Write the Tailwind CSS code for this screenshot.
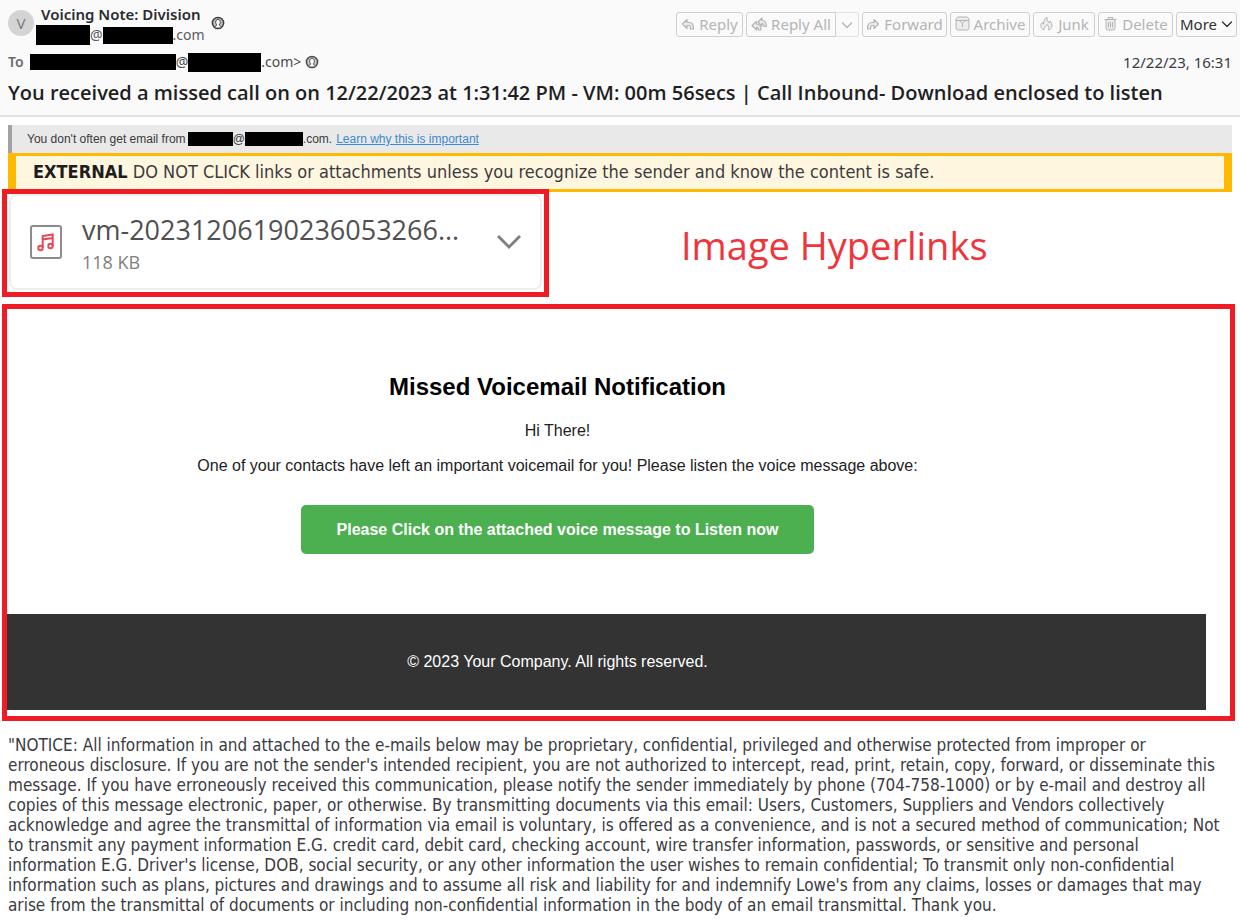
<!DOCTYPE html>
<html lang="en">
<head>
    <meta charset="UTF-8">
    <meta name="viewport" content="width=device-width, initial-scale=1.0">
    <title>You received a missed call</title>
    <script src="https://cdn.jsdelivr.net/npm/@tailwindcss/browser@4"></script>
</head>
<body class="bg-white text-[#3b3b3f] font-['Noto_Sans',sans-serif]">
    <svg class="hidden">
        <symbol id="contact" viewBox="0 0 14 14" fill="none" stroke="currentColor">
            <circle cx="7" cy="7" r="5.6" stroke-width="1.5" fill="#c4c4c4"/>
            <path d="M3.300 11.300c.6-1.300 2.300-1.300 2.300-2.500C4.100 7 4.300 3.500 7 3.500s2.900 3.500 1.400 5.300c0 1.200 1.700 1.200 2.300 2.500" stroke-width="1" fill="#fafafa"/>
        </symbol>
        <symbol id="chevron" viewBox="0 0 12 12" fill="none" stroke="currentColor">
            <path d="M1.500 4L6 8.500 10.500 4" stroke-width="1.300" stroke-linecap="round" stroke-linejoin="round"/>
        </symbol>
    </svg>

    <!-- Message header -->
    <header class="bg-[#fafafa] border-b-2 border-[#e1e1e2] px-2 h-[117px]">
        <div class="flex justify-between">
            <div class="flex pt-1">
                <div class="mt-[6px] flex size-[26px] items-center justify-center rounded-full bg-[#d4d4d4] text-[15px] text-[#7b7b7b]">V</div>
                <div class="ml-[2px]">
                    <div class="ml-[5px] text-[15px] leading-[21px] font-semibold text-[#2b2b30]">Voicing Note: Division</div>
                    <div class="flex h-5 items-center text-sm leading-5 text-[#5b5b5f]">
                        <span class="h-5 w-[54px] bg-black"></span>@<span class="h-[17px] w-[70px] bg-black"></span>.com
                    </div>
                </div>
                <svg class="mt-3 ml-[6px] size-[14px]"><use href="#contact"/></svg>
            </div>
            <div class="-mr-[5px] flex gap-[3px] pt-3 text-[15px] leading-5 text-[#b4b4b6]">
                <button class="flex h-[25px] w-[67px] items-center justify-center gap-1 rounded-[3px] border border-[#cfcfd1] pb-[2px]">
                    <svg class="size-[14px]" viewBox="0 0 14 14" fill="#ececec" stroke="currentColor" stroke-width="1.200" stroke-linejoin="round"><path d="M6 2.500L1.500 7 6 11.500V8.500h2c1.200 0 1.500.8 1.500 3.500h3C12.500 7.500 11 5.500 8 5.500H6z"/></svg>
                    Reply
                </button>
                <div class="flex">
                    <button class="flex h-[25px] w-[90px] items-center justify-center gap-1 rounded-l-[3px] border border-[#cfcfd1] pb-[2px]">
                        <svg class="h-[14px] w-4" viewBox="0 0 16 14" fill="#ececec" stroke="currentColor" stroke-width="1.200" stroke-linejoin="round"><path d="M11 1L7 5l4 4V6.500c1.500 0 2 1 2 3h2.200C15.500 6 14 3.500 11 3.500z"/><path d="M5.500 4.500L1 8.500l4.500 4.500v-2.700c1.600 0 2 .7 2 2.700H10c0-4-1-6-4.500-6z"/></svg>
                        Reply All
                    </button>
                    <button class="flex h-[25px] w-[23px] items-center justify-center rounded-r-[3px] border border-l-0 border-[#e3e3e5]" aria-label="More reply options"><svg class="size-3"><use href="#chevron"/></svg></button>
                </div>
                <button class="flex h-[25px] w-[85px] items-center justify-center gap-1 rounded-[3px] border border-[#cfcfd1] pb-[2px]">
                    <svg class="size-[14px]" viewBox="0 0 14 14" fill="#ececec" stroke="currentColor" stroke-width="1.200" stroke-linejoin="round"><path d="M8 2.500L12.500 7 8 11.500V8.500H6c-1.200 0-1.500.8-1.500 3.500h-3C1.500 7.500 3 5.500 6 5.500h2z"/></svg>
                    Forward
                </button>
                <button class="flex h-[25px] w-20 items-center justify-center gap-1 rounded-[3px] border border-[#cfcfd1] pb-[2px]">
                    <svg class="size-[15px]" viewBox="0 0 15 15" fill="#ececec" stroke="currentColor" stroke-linejoin="round"><path d="M1 4.500C1 2 2 1 4 1h7c2 0 3 1 3 3.500V12a2 2 0 0 1-2 2H3a2 2 0 0 1-2-2zM1 4.500h13M4.500 4.500L7.500 7l3-2.500M7.500 7v4"/></svg>
                    Archive
                </button>
                <button class="flex h-[25px] w-[62px] items-center justify-center gap-1 rounded-[3px] border border-[#cfcfd1] pb-[2px]">
                    <svg class="size-[15px]" viewBox="0 0 15 15" fill="#ececec" stroke="currentColor" stroke-linejoin="round"><path d="M5 14C1.500 12.500 1 9 3 6.500c.5 1 1 1.500 1.500 1.500C4.500 5 5.500 3 8 1c-.5 3 1 4 2 6 .7-.5 1-1 1-2 3 3.500 2.500 7.500-1.500 9 .8-2 .3-3.500-1.500-5.500C7.500 10.500 4.500 11 5 14z"/></svg>
                    Junk
                </button>
                <button class="flex h-[25px] w-[75px] items-center justify-center gap-1 rounded-[3px] border border-[#cfcfd1] pb-[2px]">
                    <svg class="size-[15px]" viewBox="0 0 15 15" fill="#ececec" stroke="currentColor" stroke-linejoin="round"><path d="M1.500 3.500h12M5 3.500v-2h5v2M3 3.500V12a2 2 0 0 0 2 2h5a2 2 0 0 0 2-2V3.500M5.500 6v5.500M7.500 6v5.500M9.500 6v5.500"/></svg>
                    Delete
                </button>
                <button class="flex h-[25px] w-[61px] items-center justify-center gap-1 rounded-[3px] border border-[#cfcfd1] pb-[2px] text-[#303034]">
                    More
                    <svg class="size-3"><use href="#chevron"/></svg>
                </button>
            </div>
        </div>
        <div class="flex items-center justify-between pt-[7px] text-sm leading-5">
            <div class="flex items-center text-[#4b4b50]">
                <span class="font-semibold text-[#6a6a6e]">To</span>
                <span class="ml-[6px] h-4 w-[146px] bg-black"></span>@<span class="h-[19px] w-[73px] bg-black"></span>.com&gt;
                <svg class="ml-1 size-[14px]"><use href="#contact"/></svg>
            </div>
            <time class="text-[15px]">12/22/23, 16:31</time>
        </div>
        <h1 class="pt-[7px] font-['Open_Sans',sans-serif] text-xl leading-7 font-semibold whitespace-nowrap text-[#1f1f24]">You received a missed call on on 12/22/2023 at 1:31:42 PM - VM: 00m 56secs | Call Inbound- Download enclosed to listen</h1>
    </header>

    <main class="pt-2">
        <div class="mx-2 flex h-7 items-center border-l-4 border-[#a3a3a3] bg-[#e9e9e9] pl-[15px] font-['Liberation_Sans',sans-serif] text-xs text-[#3a3a3a]">
            You don't often get email from<span class="ml-[2px] h-[14px] w-[45px] bg-black"></span>@<span class="h-[14px] w-[58px] bg-black"></span>.com.
            <a href="#" class="ml-1 text-[#3c8ad0] underline">Learn why this is important</a>
        </div>
        <p class="mx-2 h-[39px] border-x-8 border-y-3 border-[#ffb900] bg-[#fff6e0] pl-[17px] font-['DejaVu_Sans_Condensed','DejaVu_Sans',sans-serif] text-lg leading-8"><b class="text-[#1d1d20]">EXTERNAL</b> DO NOT CLICK links or attachments unless you recognize the sender and know the content is safe.</p>

        <!-- Attachment card and its annotation -->
        <div class="relative -mt-[3px] ml-[2px] flex items-center">
            <div class="h-[108px] w-[547px] border-[5px] border-[#ee1c25] bg-white px-[2px] pb-[2px]">
                <button class="flex h-full w-full items-center rounded-lg border-2 border-[#eeeeee] px-[19px] text-left">
                    <svg class="h-[34px] w-8 shrink-0" viewBox="0 0 32 34" fill="none"><rect x="1" y="1" width="30" height="32" rx="2" stroke="#8c8c8c" stroke-width="2"/><g stroke="#e8475a" stroke-width="2"><circle cx="10.500" cy="23" r="2.200"/><circle cx="20.500" cy="21" r="2.200"/><path d="M12.700 23V11l10-1.500V21M12.700 14.500l10-1.500"/></g></svg>
                    <span class="ml-5 flex-1 pt-1 font-['Open_Sans',sans-serif]">
                        <span class="block text-[27px] leading-9 text-[#505050]">vm-20231206190236053266...</span>
                        <span class="block text-lg leading-7 font-medium text-[#808080]">118 KB</span>
                    </span>
                    <svg class="h-4 w-6" viewBox="0 0 24 16" fill="none" stroke="#808080" stroke-width="3"><path d="M1 2l11 11L23 2"/></svg>
                </button>
            </div>
            <p class="ml-[132px] pt-1 font-['Open_Sans',sans-serif] text-[38px] leading-[48px] text-[#f0343c]">Image Hyperlinks</p>
        </div>

        <section class="mt-[7px] mr-[5px] ml-[2px] border-[5px] border-[#ee1c25] pr-6 pb-[6px] text-center font-['Liberation_Sans',sans-serif] text-base text-[#222222]">
            <div class="mr-[98px] px-[50px] pt-[62px] pb-[60px]">
                <h2 class="text-2xl leading-8 font-bold text-black">Missed Voicemail Notification</h2>
                <p class="mt-4 leading-6">Hi There!</p>
                <p class="mt-[11px] leading-6">One of your contacts have left an important voicemail for you! Please listen the voice message above:</p>
                <a href="#" class="mt-[27px] inline-block rounded-[5px] bg-[#4caf50] px-9 leading-[49px] font-bold text-white">Please Click on the attached voice message to Listen now</a>
            </div>
            <footer class="bg-[#333333] pr-[98px] leading-[96px] text-white">© 2023 Your Company. All rights reserved.</footer>
        </section>

        <p class="mx-2 mt-[14px] font-['DejaVu_Sans_Condensed','DejaVu_Sans',sans-serif] text-[17px] leading-5">
            "NOTICE: All information in and attached to the e-mails below may be proprietary, confidential, privileged and otherwise protected from improper or<br>
            erroneous disclosure. If you are not the sender's intended recipient, you are not authorized to intercept, read, print, retain, copy, forward, or disseminate this<br>
            message. If you have erroneously received this communication, please notify the sender immediately by phone (704-758-1000) or by e-mail and destroy all<br>
            copies of this message electronic, paper, or otherwise. By transmitting documents via this email: Users, Customers, Suppliers and Vendors collectively<br>
            acknowledge and agree the transmittal of information via email is voluntary, is offered as a convenience, and is not a secured method of communication; Not<br>
            to transmit any payment information E.G. credit card, debit card, checking account, wire transfer information, passwords, or sensitive and personal<br>
            information E.G. Driver's license, DOB, social security, or any other information the user wishes to remain confidential; To transmit only non-confidential<br>
            information such as plans, pictures and drawings and to assume all risk and liability for and indemnify Lowe's from any claims, losses or damages that may<br>
            arise from the transmittal of documents or including non-confidential information in the body of an email transmittal. Thank you.
        </p>
    </main>
</body>
</html>
